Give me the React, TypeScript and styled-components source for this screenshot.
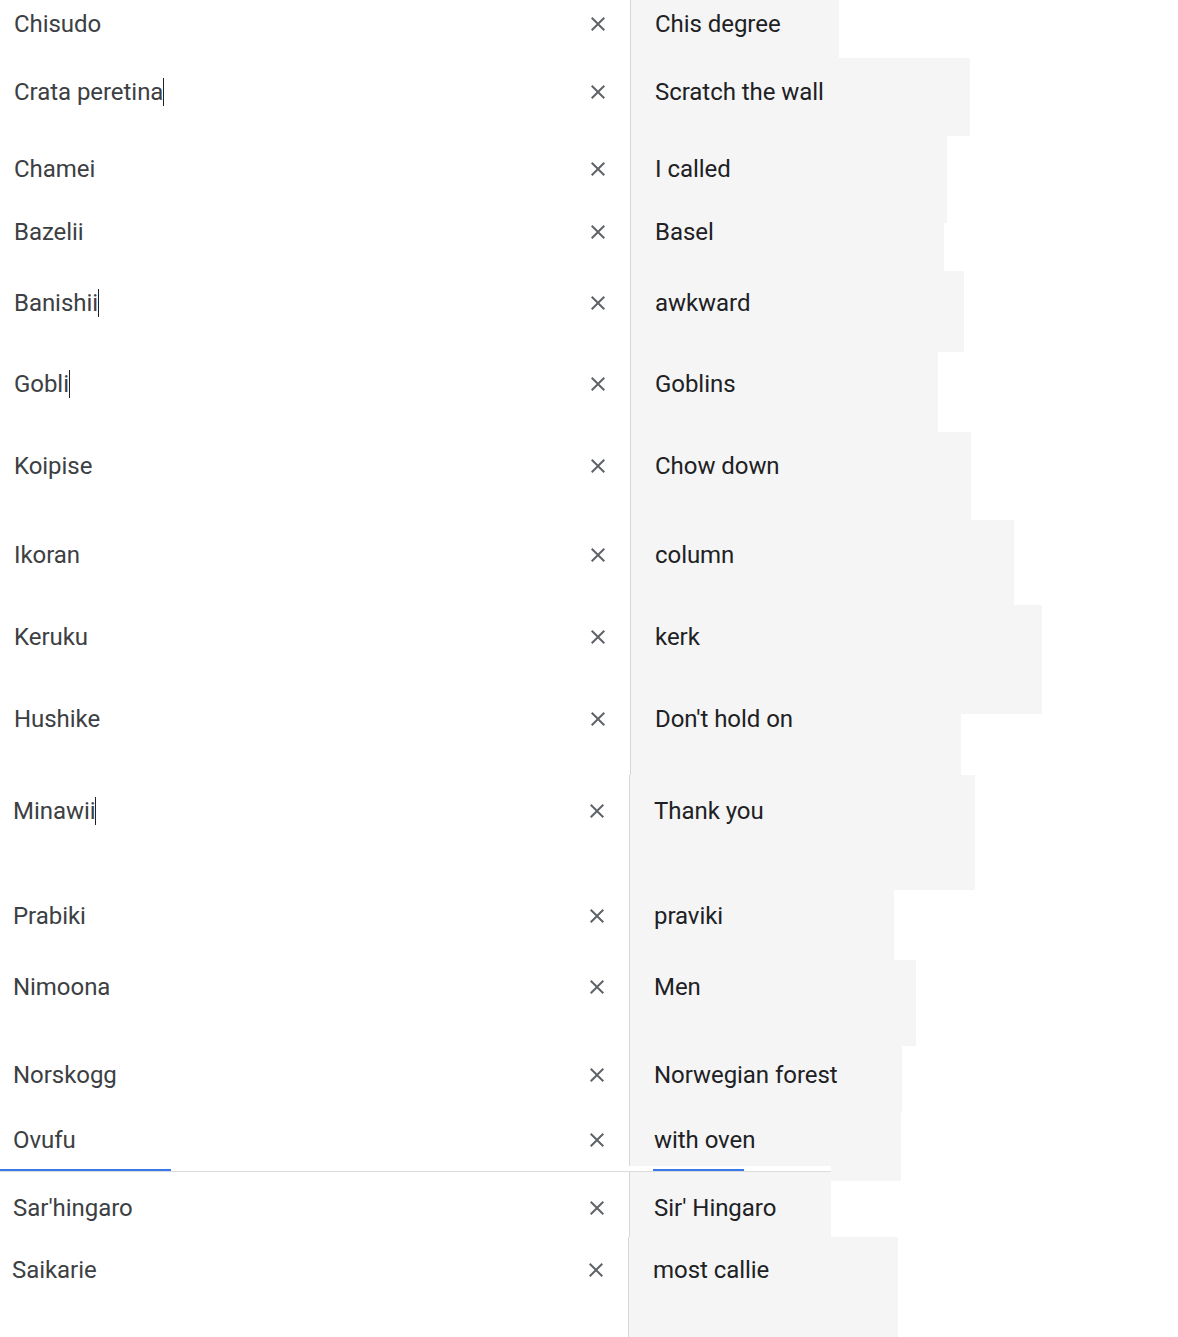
import React from "react";
import styled, { createGlobalStyle } from "styled-components";

const GlobalStyle = createGlobalStyle`
  html, body {
    margin: 0;
    padding: 0;
    background: #ffffff;
  }
  body {
    font-family: Roboto, "Liberation Sans", Arial, sans-serif;
    overflow: hidden;
  }
`;

type Entry = {
  h: number;
  c: number;
  right: number;
  dx: number;
  src: string;
  dst: string;
  caret?: boolean;
  tabs?: boolean;
};

const entries: Entry[] = [
  { h: 58, c: 24, right: 839, dx: 0, src: "Chisudo", dst: "Chis degree" },
  { h: 78, c: 34, right: 970, dx: 0, src: "Crata peretina", dst: "Scratch the wall", caret: true },
  { h: 87, c: 33, right: 947, dx: 0, src: "Chamei", dst: "I called" },
  { h: 48, c: 9, right: 944, dx: 0, src: "Bazelii", dst: "Basel" },
  { h: 81, c: 32, right: 964, dx: 0, src: "Banishii", dst: "awkward", caret: true },
  { h: 80, c: 32, right: 938, dx: 0, src: "Gobli", dst: "Goblins", caret: true },
  { h: 88, c: 34, right: 971, dx: 0, src: "Koipise", dst: "Chow down" },
  { h: 85, c: 35, right: 1014, dx: 0, src: "Ikoran", dst: "column" },
  { h: 109, c: 32, right: 1042, dx: 0, src: "Keruku", dst: "kerk" },
  { h: 61, c: 5, right: 961, dx: 0, src: "Hushike", dst: "Don't hold on" },
  { h: 115, c: 36, right: 975, dx: -1, src: "Minawii", dst: "Thank you", caret: true },
  { h: 70, c: 26, right: 894, dx: -1, src: "Prabiki", dst: "praviki" },
  { h: 86, c: 27, right: 916, dx: -1, src: "Nimoona", dst: "Men" },
  { h: 67, c: 29, right: 902, dx: -1, src: "Norskogg", dst: "Norwegian forest" },
  { h: 68, c: 27, right: 901, dx: -1, src: "Ovufu", dst: "with oven", tabs: true },
  { h: 56, c: 27, right: 831, dx: -1, src: "Sar'hingaro", dst: "Sir' Hingaro" },
  { h: 100, c: 33, right: 898, dx: -2, src: "Saikarie", dst: "most callie" },
];

const Page = styled.div`
  display: flex;
  flex-direction: column;
  width: 1178px;
  height: 1337px;
  overflow: hidden;
`;

const Row = styled.div<{ $h: number; $dx: number }>`
  position: relative;
  display: flex;
  flex-direction: row;
  align-items: stretch;
  height: ${(p) => p.$h}px;
  margin-left: ${(p) => p.$dx}px;
  flex-shrink: 0;
`;

const SourceCell = styled.div`
  box-sizing: border-box;
  width: 630px;
  flex-shrink: 0;
  display: flex;
  align-items: flex-start;
  justify-content: space-between;
  padding: 0 20px 0 14px;
`;

const SourceText = styled.div<{ $mt: number }>`
  margin-top: ${(p) => p.$mt}px;
  font-size: 24px;
  line-height: 32px;
  color: #3c4043;
  white-space: nowrap;
  letter-spacing: -0.05px;
  display: flex;
  align-items: center;
`;

const Caret = styled.span`
  display: inline-block;
  width: 1px;
  height: 28px;
  background: #202124;
`;

const ClearButton = styled.div<{ $mt: number }>`
  margin-top: ${(p) => p.$mt}px;
  width: 24px;
  height: 24px;
  display: flex;
  align-items: center;
  justify-content: center;
  color: #5f6368;

  svg {
    display: block;
  }
`;

const TargetPanel = styled.div<{ $w: number }>`
  box-sizing: border-box;
  width: ${(p) => p.$w}px;
  flex-shrink: 0;
  background: #f5f5f5;
  border-left: 1px solid #d6d6d6;
  padding-left: 24px;
`;

const TargetText = styled.div<{ $mt: number }>`
  margin-top: ${(p) => p.$mt}px;
  font-size: 24px;
  line-height: 32px;
  color: #202124;
  letter-spacing: -0.05px;
  white-space: nowrap;
`;

const TabStrip = styled.div`
  position: absolute;
  left: 1px;
  top: 53px;
  width: 831px;
  height: 5px;
  background: #ffffff;
  border-bottom: 1px solid #dadce0;
`;

const TabIndicator = styled.div<{ $left: number; $width: number }>`
  position: absolute;
  top: 3px;
  left: ${(p) => p.$left}px;
  width: ${(p) => p.$width}px;
  height: 2px;
  background: #3b78e7;
`;

const CloseIcon = () => (
  <svg width="24" height="24" viewBox="0 0 24 24" fill="currentColor" aria-hidden="true">
    <path d="M19 6.41L17.59 5 12 10.59 6.41 5 5 6.41 10.59 12 5 17.59 6.41 19 12 13.41 17.59 19 19 17.59 13.41 12z" />
  </svg>
);

export default function App() {
  return (
    <>
      <GlobalStyle />
      <Page>
        {entries.map((e, i) => {
          const mt = e.c - 16;
          return (
            <Row key={i} $h={e.h} $dx={e.dx}>
              <SourceCell>
                <SourceText $mt={mt}>
                  {e.src}
                  {e.caret && <Caret />}
                </SourceText>
                <ClearButton $mt={e.c - 12}>
                  <CloseIcon />
                </ClearButton>
              </SourceCell>
              <TargetPanel $w={e.right - (630 + e.dx)}>
                <TargetText $mt={mt}>{e.dst}</TargetText>
              </TargetPanel>
              {e.tabs && (
                <TabStrip>
                  <TabIndicator $left={0} $width={171} />
                  <TabIndicator $left={653} $width={91} />
                </TabStrip>
              )}
            </Row>
          );
        })}
      </Page>
    </>
  );
}
